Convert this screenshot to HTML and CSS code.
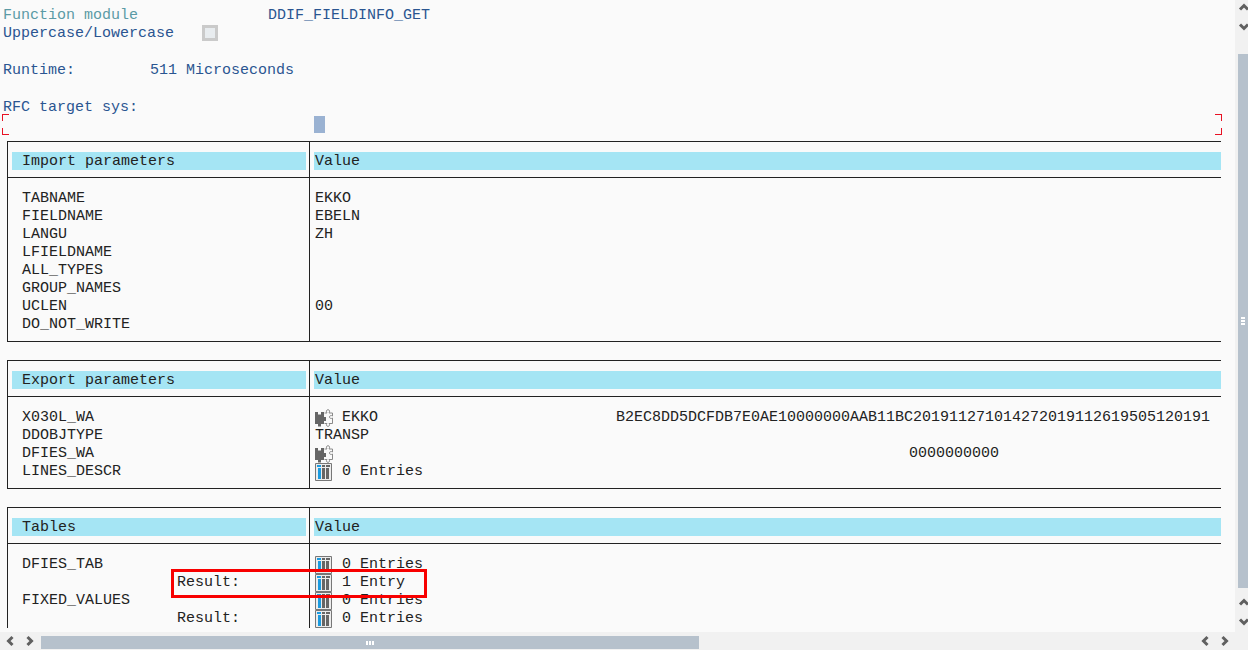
FILE: index.html
```
<!DOCTYPE html>
<html lang="en">
  <head>
    <meta charset="utf-8" />
    <meta name="viewport" content="width=device-width, initial-scale=1" />
    <title>Function module DDIF_FIELDINFO_GET</title>
    <link rel="stylesheet" href="styles.css">
  </head>

  <body>
    <!-- icons used in the value column -->
    <svg class="sprite" aria-hidden="true">
      <symbol id="puzzle" viewBox="0 0 18 18">
        <path d="M0 3h3v2.500h3V3h3v5h2v4H9v3H6v2.500H3V15H0z" fill="#666" />
        <path d="M9.500 4h2.500C10.800 2.400 11.500 .7 13 .7s2.200 1.700 1 3.300h3.500v3c-1.500-1-3-.3-3 1s1.500 2 3 1v5.500H14c1.200 1.500 .5 2.800-1 2.800s-2.200-1.300-1-2.800H9.500" fill="none" stroke="#8a8a8a" />
      </symbol>
      <symbol id="grid" viewBox="0 0 18 18">
        <path d="M.5 .5h16v17H.5z" fill="#ececec" stroke="#777" />
        <path d="M2 2h4v2H2zM3 5h3v11H3z" fill="#1b9be0" />
        <path d="M7 2h3v2H7zM11 2h4v2h-4zM7 5h3v11H7zM11 5h3v11h-3z" fill="#666" />
      </symbol>
      <symbol id="chevron" viewBox="0 0 12 12">
        <path d="M2 8.500l4-4 4 4" fill="none" stroke="#606060" stroke-width="3" />
      </symbol>
    </svg>

    <div class="window">
      <main class="list">
        <div class="line"><span class="caption">Function module</span><span>DDIF_FIELDINFO_GET</span></div>
        <div class="line">
          <label class="case" for="case">Uppercase/Lowercase</label>
          <input type="checkbox" id="case" />
        </div>
        <div class="line spaced"><span class="runtime">Runtime:</span><span>511 Microseconds</span></div>
        <div class="line spaced">RFC target sys:</div>
        <div class="focus-row"><span class="cursor"></span></div>

        <table class="params">
          <thead>
            <tr><th><span class="name">Import parameters</span></th><th><span>Value</span></th></tr>
          </thead>
          <tbody>
            <tr><td>TABNAME</td><td>EKKO</td></tr>
            <tr><td>FIELDNAME</td><td>EBELN</td></tr>
            <tr><td>LANGU</td><td>ZH</td></tr>
            <tr><td>LFIELDNAME</td><td></td></tr>
            <tr><td>ALL_TYPES</td><td></td></tr>
            <tr><td>GROUP_NAMES</td><td></td></tr>
            <tr><td>UCLEN</td><td>00</td></tr>
            <tr><td>DO_NOT_WRITE</td><td></td></tr>
          </tbody>
        </table>

        <table class="params">
          <thead>
            <tr><th><span class="name">Export parameters</span></th><th><span>Value</span></th></tr>
          </thead>
          <tbody>
            <tr>
              <td>X030L_WA</td>
              <td><div class="value"><svg><use href="#puzzle" /></svg><span class="field">EKKO</span><span>B2EC8DD5DCFDB7E0AE10000000AAB11BC201911271014272019112619505120191</span></div></td>
            </tr>
            <tr><td>DDOBJTYPE</td><td>TRANSP</td></tr>
            <tr>
              <td>DFIES_WA</td>
              <td><div class="value"><svg><use href="#puzzle" /></svg><span class="field wide"></span><span>0000000000</span></div></td>
            </tr>
            <tr>
              <td>LINES_DESCR</td>
              <td><div class="value"><svg><use href="#grid" /></svg><span>0 Entries</span></div></td>
            </tr>
          </tbody>
        </table>

        <table class="params open">
          <thead>
            <tr><th><span class="name">Tables</span></th><th><span>Value</span></th></tr>
          </thead>
          <tbody>
            <tr>
              <td>DFIES_TAB</td>
              <td><div class="value"><svg><use href="#grid" /></svg><span>0 Entries</span></div></td>
            </tr>
            <tr>
              <td class="result">Result:<span class="marker"></span></td>
              <td><div class="value"><svg><use href="#grid" /></svg><span>1 Entry</span></div></td>
            </tr>
            <tr>
              <td>FIXED_VALUES</td>
              <td><div class="value"><svg><use href="#grid" /></svg><span>0 Entries</span></div></td>
            </tr>
            <tr>
              <td class="result">Result:</td>
              <td><div class="value"><svg><use href="#grid" /></svg><span>0 Entries</span></div></td>
            </tr>
          </tbody>
        </table>
      </main>

      <div class="vbar">
        <button type="button" aria-label="Scroll up"><svg><use href="#chevron" /></svg></button>
        <button type="button" aria-label="Scroll down"><svg class="down"><use href="#chevron" /></svg></button>
        <div class="vthumb"><span class="grip"></span></div>
        <button type="button" aria-label="Scroll up"><svg><use href="#chevron" /></svg></button>
        <button type="button" aria-label="Scroll down"><svg class="down"><use href="#chevron" /></svg></button>
      </div>

      <div class="hbar">
        <button type="button" aria-label="Scroll left"><svg class="left"><use href="#chevron" /></svg></button>
        <button type="button" aria-label="Scroll right"><svg class="right"><use href="#chevron" /></svg></button>
        <div class="track"><div class="hthumb"><span class="grip"></span></div></div>
        <button type="button" aria-label="Scroll left"><svg class="left"><use href="#chevron" /></svg></button>
        <button type="button" aria-label="Scroll right"><svg class="right"><use href="#chevron" /></svg></button>
      </div>
    </div>
  </body>
</html>
```
FILE: styles.css
```
* {
  box-sizing: border-box;
}

body {
  margin: 0;
  background-color: #fafafa;
  color: #222;
  font-family: 'Liberation Mono', monospace;
  font-size: 15px;
  line-height: 18px;
}

.sprite {
  display: none;
}

.window {
  display: grid;
  grid-template-columns: minmax(0, 1fr) 13px;
  grid-template-rows: minmax(0, 1fr) 18px;
  height: 100vh;
  overflow: hidden;
}

.list {
  overflow: hidden;
  padding: 7px 14px 0 0;
}

.line {
  display: flex;
  align-items: center;
  height: 18px;
  padding-left: 3px;
  color: #2a5591;
}

.line.spaced {
  margin-top: 19px;
}

.caption {
  width: 265px;
  color: #5b9aa5;
}

.case {
  width: 199px;
}

.runtime {
  width: 147px;
}

.line input {
  appearance: none;
  width: 16px;
  height: 16px;
  margin: 0 0 2px;
  border: 3px solid #cacaca;
  background-color: #e8ecef;
}

/* red corners round the row that has the cursor */
.focus-row {
  --red: linear-gradient(#e81123, #e81123);
  height: 21px;
  margin: -3px -1px 6px 2px;
  padding: 2px 0 0 312px;
  background-image: var(--red), var(--red), var(--red), var(--red),
    var(--red), var(--red), var(--red), var(--red);
  background-repeat: no-repeat;
  background-position: left top, left top, right top, right top,
    left bottom, left bottom, right bottom, right bottom;
  background-size: 7px 1px, 1px 7px, 7px 1px, 1px 7px,
    7px 1px, 1px 7px, 7px 1px, 1px 7px;
}

.cursor {
  display: block;
  width: 11px;
  height: 17px;
  background-color: #9ab2d2;
}

.params {
  width: calc(100% - 7px);
  margin: 0 0 18px 7px;
  border-spacing: 0;
  table-layout: fixed;
  border: 1px solid #222;
  border-right: 0;
}

.params.open {
  border-bottom: 0;
}

.params th,
.params td {
  height: 18px;
  padding: 0 0 0 5px;
  font-weight: normal;
  text-align: left;
  white-space: nowrap;
}

.params th {
  height: 36px;
  padding: 2px 0 0 4px;
  border-bottom: 1px solid #222;
}

.params th:first-child {
  width: 302px;
  padding-right: 3px;
}

.params th:first-child,
.params td:first-child {
  border-right: 1px solid #222;
}

/* the text sits low in the coloured bar */
.params th span {
  display: block;
  height: 18px;
  padding-left: 1px;
  line-height: 20px;
  background-color: #a5e5f4;
}

.params th .name {
  padding-left: 10px;
}

.params td:first-child {
  padding-left: 14px;
}

.params tbody tr:first-child td {
  height: 30px;
  padding-top: 12px;
}

.params tbody tr:last-child td {
  height: 25px;
  padding-bottom: 7px;
}

.params.open tbody tr:last-child td {
  height: 18px;
  padding-bottom: 0;
}

.params td.result:first-child {
  position: relative;
  padding-left: 169px;
}

.marker {
  position: absolute;
  z-index: 1;
  top: -5px;
  left: 163px;
  width: 256px;
  height: 29px;
  border: 3px solid #f80000;
}

.value {
  display: flex;
  height: 18px;
}

.value svg {
  flex: none;
  width: 18px;
  height: 18px;
  margin-right: 9px;
}

.field {
  flex: none;
  width: 274px;
}

.field.wide {
  width: 567px;
}

.vbar,
.hbar {
  display: flex;
  background-color: #f1f1f1;
}

.vbar {
  flex-direction: column;
  padding: 0 0 0 3px;
}

.hbar {
  grid-column: 1 / -1;
  align-items: center;
  padding-right: 13px;
}

.vbar button,
.hbar button {
  display: flex;
  flex: none;
  align-items: center;
  justify-content: center;
  width: 20px;
  height: 18px;
  padding: 0;
  border: 0;
  background: none;
}

.vbar button {
  width: 12px;
  height: 20px;
}

.vbar button:first-child {
  height: 14px;
}

.vbar button:nth-child(2) {
  height: 26px;
}

.vbar svg,
.hbar svg {
  width: 12px;
  height: 12px;
}

.down {
  transform: rotate(180deg);
}

.left {
  transform: rotate(-90deg);
}

.right {
  transform: rotate(90deg);
}

.vthumb,
.hthumb {
  display: flex;
  align-items: center;
  justify-content: center;
  background-color: #b6c1cc;
}

.vthumb {
  flex: 1;
  margin: 14px 0 4px;
}

.track {
  flex: 1;
  padding-left: 1px;
}

.hthumb {
  width: 57%;
  height: 13px;
  margin-top: 3px;
}

.grip {
  width: 8px;
  height: 4px;
  background: repeating-linear-gradient(90deg, #fff 0 2px, #b6c1cc 2px 3px);
}

.vthumb .grip {
  width: 4px;
  height: 8px;
  background: repeating-linear-gradient(#fff 0 2px, #b6c1cc 2px 3px);
}
```
